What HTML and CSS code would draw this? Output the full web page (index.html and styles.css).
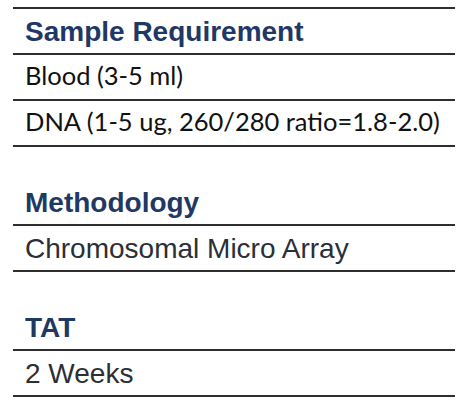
FILE: index.html
```html
<!DOCTYPE html>
<html>
<head>
<meta charset="utf-8">
<link rel="stylesheet" href="styles.css">
</head>
<body>
<div class="sheet">
  <div class="row head">Sample Requirement</div>
  <div class="row cal">Blood (3-5 ml)</div>
  <div class="row cal">DNA (1-5 ug, 260/280 ratio=1.8-2.0)</div>
  <div class="row head tall">Methodology</div>
  <div class="row ari">Chromosomal Micro Array</div>
  <div class="row head tall">TAT</div>
  <div class="row ari">2 Weeks</div>
</div>
</body>
</html>
```
FILE: styles.css
```css
html, body {
  margin: 0;
  padding: 0;
  background: #ffffff;
}
.sheet {
  margin: 7px 0 0 13px;
  width: 442px;
  border-top: 2px solid #2e2e2e;
}
.row {
  height: 37px;
  padding: 0 0 7px 12px;
  border-bottom: 2px solid #2e2e2e;
  box-sizing: content-box;
  display: flex;
  align-items: flex-end;
  white-space: nowrap;
  line-height: 1;
}
.tall {
  height: 70px;
}
.head {
  font-family: "Liberation Sans", Arial, sans-serif;
  font-weight: bold;
  font-size: 28px;
  color: #1f3864;
}
.cal {
  font-family: Lato, "Liberation Sans", sans-serif;
  font-size: 25.5px;
  color: #111111;
  height: 33px;
  padding-bottom: 11px;
}
.ari {
  font-family: "Liberation Sans", Arial, sans-serif;
  font-size: 28px;
  color: #2b2f36;
}
```
